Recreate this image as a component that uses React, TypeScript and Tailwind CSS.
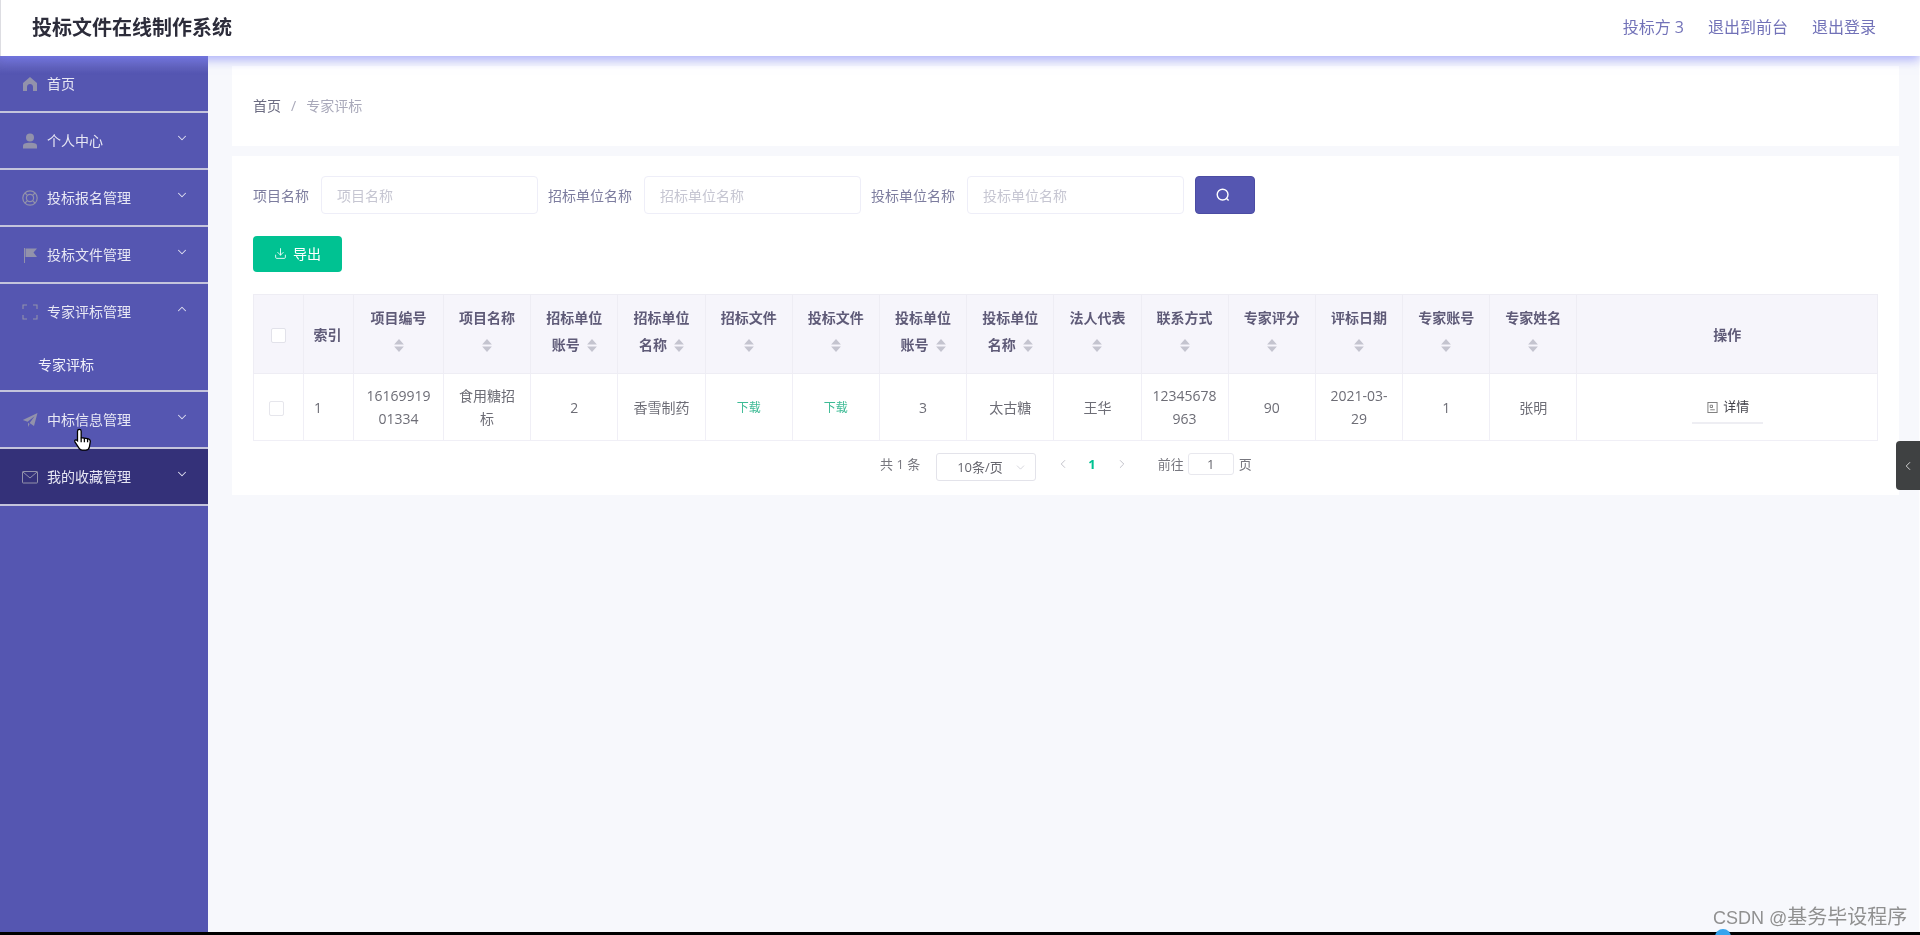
import { ChevronDown, ChevronLeft, ChevronRight, ChevronUp, Download } from "lucide-react"
import type { ReactNode } from "react"

const iconClass = "w-[16px] h-[16px] shrink-0 fill-[#9292ab] text-[#9292ab]"

const HomeIcon = () => (
  <svg viewBox="0 0 16 16" className={iconClass}>
    <path d="M8 1 L15 7 V15 H11 V11 C11 9 9.6 8 8 8 C6.4 8 5 9 5 11 V15 H1 V7 Z" />
  </svg>
)
const UserIcon = () => (
  <svg viewBox="0 0 16 16" className={iconClass}>
    <circle cx="8" cy="4.6" r="4" />
    <path d="M1 15.5 V13 C1 10.8 3 9.8 8 9.8 C13 9.8 15 10.8 15 13 V15.5 Z" />
  </svg>
)
const HelpIcon = () => (
  <svg viewBox="0 0 16 16" className={iconClass} style={{ fill: "none" }} stroke="currentColor" strokeWidth="1.2">
    <circle cx="8" cy="8" r="7.2" />
    <circle cx="8" cy="8" r="3.6" />
    <path d="M3 3 L5.4 5.4 M13 3 L10.6 5.4 M3 13 L5.4 10.6 M13 13 L10.6 10.6" />
  </svg>
)
const FlagIcon = () => (
  <svg viewBox="0 0 16 16" className={iconClass}>
    <path d="M2 1 H3 V16 H2 Z" />
    <path d="M3.5 1.5 H15 L11.5 5.5 L15 10 H3.5 Z" />
  </svg>
)
const FullIcon = () => (
  <svg viewBox="0 0 16 16" className={iconClass} style={{ fill: "none" }} stroke="currentColor" strokeWidth="1.1">
    <path d="M1 5 V1 H5 M11 1 H15 V5 M15 11 V15 H11 M5 15 H1 V11" />
  </svg>
)
const SendIcon = () => (
  <svg viewBox="0 0 16 16" className={iconClass}>
    <path d="M15.5 1 L12 14 L7.6 11 L12.6 4.2 L5.6 9.8 L0.8 8 Z" />
    <path d="M6 10.8 L7.6 12 L6 15 Z" />
  </svg>
)
const MailIcon = () => (
  <svg viewBox="0 0 16 16" className={iconClass} style={{ fill: "none" }} stroke="currentColor" strokeWidth="1">
    <rect x="0.5" y="2.5" width="15" height="11.5" rx="0.6" />
    <path d="M1 3 L8 9 L15 3" />
  </svg>
)

const Caret = () => (
  <svg viewBox="0 0 9 12" className="inline-block w-[10px] h-[13px] align-[-2px] fill-[#c4c4cf]">
    <path d="M4.5 0 L9 5 H0 Z M4.5 12 L0 7 H9 Z" />
  </svg>
)

function NavItem({ icon, label, open, active }: { icon: ReactNode; label: string; open?: boolean; active?: boolean }) {
  return (
    <div className={`flex items-center h-[55px] pl-[22px] pr-[19px] ${active ? "bg-[#343179]" : ""}`}>
      {icon}
      <span className="ml-[9px] text-[14px] text-[#e7e7f4] flex-1">{label}</span>
      {open === undefined ? null : open ? (
        <ChevronUp size={14} strokeWidth={1.8} className="text-[#e0e0f0] -mt-[6px]" />
      ) : (
        <ChevronDown size={14} strokeWidth={1.8} className="text-[#e0e0f0] -mt-[6px]" />
      )}
    </div>
  )
}

const Line = () => <div className="h-[2px] bg-[#c4c4dc]" />

function Sidebar() {
  return (
    <aside className="w-[208px] shrink-0 bg-[#5556b1]">
      <div className="bg-[linear-gradient(#6f70ca,#5556b1_18px)]">
        <NavItem icon={<HomeIcon />} label="首页" />
      </div>
      <Line />
      <NavItem icon={<UserIcon />} label="个人中心" open={false} />
      <Line />
      <NavItem icon={<HelpIcon />} label="投标报名管理" open={false} />
      <Line />
      <NavItem icon={<FlagIcon />} label="投标文件管理" open={false} />
      <Line />
      <NavItem icon={<FullIcon />} label="专家评标管理" open />
      <div className="h-[51px] flex items-center pl-[38px] text-[14px] text-[#f0f0fa]">专家评标</div>
      <Line />
      <NavItem icon={<SendIcon />} label="中标信息管理" open={false} />
      <Line />
      <NavItem icon={<MailIcon />} label="我的收藏管理" open={false} active />
      <Line />
    </aside>
  )
}

function Field({ label }: { label: string }) {
  return (
    <>
      <span className="text-[14px] text-[#7d7d9f] mr-[12px]">{label}</span>
      <input
        placeholder={label}
        className="w-[217px] h-[38px] mr-[10px] px-[15px] bg-white border border-[#eeeef8] rounded-[4px] text-[14px] outline-none placeholder:text-[#c6c6d2]"
      />
    </>
  )
}

const headers = [
  ["项目编号"],
  ["项目名称"],
  ["招标单位", "账号"],
  ["招标单位", "名称"],
  ["招标文件"],
  ["投标文件"],
  ["投标单位", "账号"],
  ["投标单位", "名称"],
  ["法人代表"],
  ["联系方式"],
  ["专家评分"],
  ["评标日期"],
  ["专家账号"],
  ["专家姓名"],
]

const cells = [
  "1616991901334",
  "食用糖招标",
  "2",
  "香雪制药",
  "下载",
  "下载",
  "3",
  "太古糖",
  "王华",
  "12345678963",
  "90",
  "2021-03-\u200B29",
  "1",
  "张明",
]

function DataTable() {
  return (
    <table className="w-[1625px] table-fixed border-collapse border border-[#f0eff6]">
      <colgroup>
        <col className="w-[50px]" />
        <col className="w-[50px]" />
        <col className="w-[90px]" />
        {cells.slice(1).map((_, i) => (
          <col key={i} className="w-[87.2px]" />
        ))}
        <col />
      </colgroup>
      <thead>
        <tr className="h-[79px] bg-[#f6f5fb] text-[14px] font-bold text-[#5f5b78]">
          <th className="border border-[#eeedf4] font-bold">
            <span className="inline-block w-[15px] h-[15px] bg-white border border-[#e2e2ea] rounded-[2px] align-middle" />
          </th>
          <th className="border border-[#eeedf4] font-bold pr-[2px]">索引</th>
          {headers.map((h, i) => (
            <th key={i} className="border border-[#eeedf4] font-bold px-[10px] pb-[6px] leading-[27px]">
              <div>{h[0]}</div>
              <div>
                {h[1] ? <span className="mr-[7px]">{h[1]}</span> : null}
                <Caret />
              </div>
            </th>
          ))}
          <th className="border border-[#eeedf4] font-bold">操作</th>
        </tr>
      </thead>
      <tbody>
        <tr className="h-[67px] text-[14px] text-[#6d6d76]">
          <td className="border border-[#f0eff6] text-center">
            <span className="inline-block w-[15px] h-[15px] mr-[5px] bg-white border border-[#e6e6ec] rounded-[2px] align-middle" />
          </td>
          <td className="border border-[#f0eff6] pl-[10px]">1</td>
          {cells.map((c, i) => (
            <td key={i} className="border border-[#f0eff6] px-[10px] text-center leading-[23px] [overflow-wrap:anywhere]">
              {c === "下载" ? <span className="text-[12px] text-[#3dbb95]">{c}</span> : c}
            </td>
          ))}
          <td className="border border-[#f0eff6] text-center">
            <div className="inline-flex items-center justify-center gap-[5px] w-[71px] h-[32px] mt-[2px] border-b-2 border-[#eeeef3] text-[13px] text-[#45454d]">
              <svg viewBox="0 0 12 12" className="w-[11px] h-[11px] ml-[2px] fill-none stroke-[#777]">
                <rect x="1" y="0.5" width="10" height="11" />
                <path d="M3.5 3.5 H6 V6 H3.5 Z M3.5 8.5 H8.5" />
              </svg>
              详情
            </div>
          </td>
        </tr>
      </tbody>
    </table>
  )
}

function Pagination() {
  return (
    <div className="flex items-start h-[28px] mt-[12px] pl-[627px] text-[13px] leading-[22px] text-[#77777f]">
      <span>共 1 条</span>
      <div className="flex items-center justify-between w-[100px] h-[28px] ml-[16px] pl-[20px] pr-[8px] border border-[#e3e3ea] rounded-[3px] text-[#66666e]">
        <span>10条/页</span>
        <ChevronDown size={13} strokeWidth={1} className="text-[#b5b5c0]" />
      </div>
      <ChevronLeft size={14} strokeWidth={1.3} className="ml-[20px] mt-[4px] text-[#b0b0ba]" />
      <span className="ml-[18px] font-bold text-[#00c292]">1</span>
      <ChevronRight size={14} strokeWidth={1.3} className="ml-[19px] mt-[4px] text-[#b0b0ba]" />
      <span className="ml-[29px]">前往</span>
      <div className="flex items-center justify-center w-[46px] h-[22px] ml-[4px] border border-[#e8e8ee] rounded-[3px] text-[#66666e]">
        1
      </div>
      <span className="ml-[5px]">页</span>
    </div>
  )
}

export default function App() {
  return (
    <div className="relative w-[1920px] h-[935px] overflow-hidden blur-[0.5px] bg-[#f7f8fc] font-['Open_Sans','Noto_Sans_CJK_SC',sans-serif]">
      <header className="relative z-10 flex items-center justify-between h-[56px] pl-[31px] pr-[44px] bg-white border-l border-[#dddde2] shadow-[0_4px_10px_rgba(115,120,245,0.55)]">
        <h1 className="text-[20px] font-bold text-[#2c2c3a]">投标文件在线制作系统</h1>
        <nav className="flex gap-[24px] -mt-[2px] text-[16px] text-[#7272b8]">
          <span>投标方&nbsp;3</span>
          <span>退出到前台</span>
          <span>退出登录</span>
        </nav>
      </header>

      <div className="flex h-[876px]">
        <Sidebar />
        <main className="flex-1 pl-[24px] pr-[20px] pt-[10px]">
          <div className="flex items-center h-[80px] pl-[21px] pb-[2px] bg-white text-[14px]">
            <span className="text-[#6c6c82]">首页</span>
            <span className="mx-[10px] text-[#a9a9ba]">/</span>
            <span className="text-[#a9a9ba]">专家评标</span>
          </div>

          <section className="h-[339px] mt-[10px] pt-[20px] px-[21px] bg-white">
            <div className="flex items-center">
              <Field label="项目名称" />
              <Field label="招标单位名称" />
              <Field label="投标单位名称" />
              <button className="flex items-center justify-center w-[60px] h-[38px] ml-[1px] bg-[#5556b1] border border-[#4b4ca3] rounded-[4px]">
                <svg viewBox="0 0 14 14" className="w-[14px] h-[14px] -ml-[4px] fill-none stroke-white stroke-[1.4]">
                  <circle cx="6.6" cy="6.6" r="5.4" />
                  <path d="M10.6 10.6 L12.6 12.6" />
                </svg>
              </button>
            </div>

            <button className="flex items-center justify-center gap-[6px] w-[89px] h-[36px] mt-[22px] pb-[1px] bg-[#00c292] rounded-[4px] text-[14px] text-white">
              <Download size={13} strokeWidth={1.6} />
              导出
            </button>

            <div className="mt-[22px]">
              <DataTable />
            </div>
            <Pagination />
          </section>
        </main>
        <div className="w-[2px] bg-[#fdfdfe]" />
      </div>

      <div className="h-[3px] bg-black" />

      <div className="absolute right-0 top-[441px] flex items-center justify-center w-[24px] h-[49px] bg-[#3f4142] rounded-l-[4px]">
        <ChevronLeft size={14} strokeWidth={1.3} className="text-white" />
      </div>

      <svg viewBox="0 0 24 26" className="absolute left-[72px] top-[427px] w-[22px] h-[25px] fill-white stroke-black stroke-[1.4]">
        <path d="M8 2 C9.4 2 10 3 10 4 V11 L17 12 C19 12.4 20 13.5 20 15 L19 21 C18.6 23 17.5 24.5 15 24.5 H11 C9.6 24.5 8.6 23.8 7.8 22.6 L3.2 15.6 C2.4 14.2 3.6 13 5 13.6 L6 14.5 V4 C6 3 6.6 2 8 2 Z" />
        <path d="M10 11 V16 M13.5 11.5 V16 M17 12 V16" />
      </svg>

      <div className="absolute left-[1713px] top-[903px] text-[18px] leading-[28px] text-[#909090] font-['Liberation_Sans','Noto_Sans_CJK_SC',sans-serif]">
        CSDN @<span className="text-[20px]">基务毕设程序</span>
      </div>

      <div className="absolute left-[1715px] top-[929px] w-[16px] h-[16px] rounded-full bg-[#35a4ee]" />
    </div>
  )
}
